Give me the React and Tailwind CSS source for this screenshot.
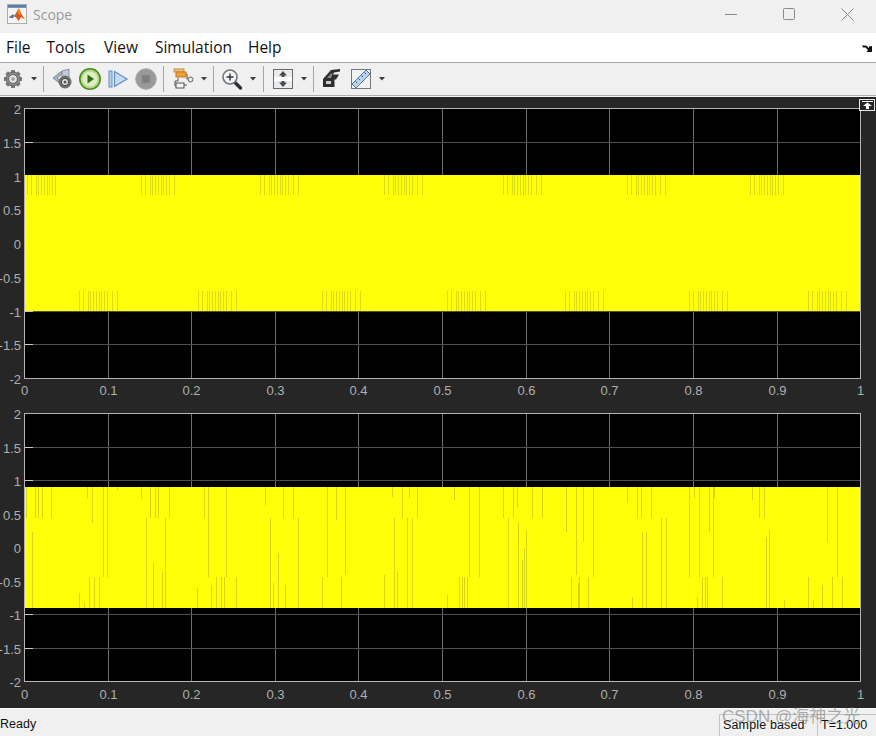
import React from 'react';

const xTicks = [24, 108, 191, 275, 358, 442, 526, 609, 693, 777, 860];
const xLabels = ['0', '0.1', '0.2', '0.3', '0.4', '0.5', '0.6', '0.7', '0.8', '0.9', '1'];
const yLabels = ['2', '1.5', '1', '0.5', '0', '-0.5', '-1', '-1.5', '-2'];

// bursts in the upper trace: [start, width]
const burst = [0, 4, 9, 11, 14, 17, 20, 22, 25, 28, 33, 38];
const topBursts = [[27, 29], [141, 33], [260, 38], [384, 38], [503, 38], [627, 38], [750, 33]];
const bottomBursts = [[79, 38], [198, 38], [322, 38], [447, 38], [565, 38], [689, 38], [808, 38]];
const upperLines = [
  ...topBursts.flatMap(([s, w]) => burst.filter(o => o <= w).map(o => [s + o, 175, 195])),
  ...bottomBursts.flatMap(([s, w]) => burst.filter(o => o <= w).map(o => [s + o, 291, 311])),
];

// lower trace, read off the picture
const T = 487, A = 518, B = 577, E = 608;
const lowerLines = [
  [26, T, A], [32, 532, E], [35, T, A], [38, T, A], [42, T, A], [51, T, A], [79, 593, E], [84, 603, E],
  [87, T, 498], [89, B, E], [92, T, 523], [94, B, E], [99, B, E], [103, T, B], [107, T, B], [117, T, 490],
  [141, T, 499], [146, A, E], [150, T, A], [153, 563, E], [155, T, A], [158, T, A], [162, 572, E], [165, A, E],
  [169, T, A], [197, 588, E], [204, T, A], [208, T, B], [211, 585, E], [216, B, E], [221, B, E], [224, B, E],
  [226, T, B], [236, B, E], [265, T, 505], [270, A, E], [273, 583, E], [278, 553, E], [283, T, A], [285, 585, E],
  [293, T, A], [298, A, E], [322, B, E], [327, T, B], [336, T, 520], [341, B, E], [345, T, 575], [384, 575, E],
  [392, T, 497], [394, A, E], [397, 572, E], [402, T, A], [407, A, E], [409, T, 498], [412, A, E], [417, T, A],
  [447, 595, E], [454, T, 500], [459, B, E], [462, B, E], [464, B, E], [467, B, E], [469, T, B], [479, T, B],
  [503, T, A], [508, A, E], [513, T, A], [517, T, 508], [518, 522, E], [522, 560, E], [524, 548, E], [526, 530, E],
  [532, T, A], [542, T, A], [566, T, 532], [571, B, E], [576, T, 575], [578, 583, E], [579, B, E], [583, T, 542],
  [588, B, E], [593, T, B], [627, T, 503], [632, 597, E], [637, T, A], [641, T, A], [642, 532, E], [646, 532, E],
  [651, T, A], [661, A, E], [666, A, E], [689, T, B], [694, T, 498], [697, 597, E], [699, T, B], [702, B, E],
  [705, B, E], [707, B, E], [709, T, 532], [713, T, B], [714, T, 498], [722, B, E], [752, T, 500], [759, T, A],
  [764, T, A], [766, 537, E], [769, 530, E], [784, 600, E], [808, B, E], [813, 600, E], [822, 585, E], [827, T, 542],
  [832, B, E], [837, T, B], [842, B, E],
];

function Plot({ y0, height, top, bottom, traceTop, traceBottom, lines, lineClass, labelY }) {
  const step = (bottom - top) / 8;
  const ys = yLabels.map((_, i) => top + step * i);
  return (
    <svg viewBox={`0 ${y0} 876 ${height}`} className="block w-[876px] shrink-0" style={{ height }}>
      <rect x="24" y={top} width="836" height={bottom - top} className="fill-black" />
      {xTicks.slice(1, -1).map(x => (
        <line key={x} x1={x + 0.5} x2={x + 0.5} y1={top} y2={bottom} className="stroke-[#6e6e6e]" />
      ))}
      {ys.slice(1, -1).map(y => (
        <line key={y} x1="24" x2="860" y1={Math.round(y) + 0.5} y2={Math.round(y) + 0.5} className="stroke-[#505050]" />
      ))}
      {ys.slice(1, -1).map(y => (
        <line key={y} x1="24" x2="33" y1={Math.round(y) + 0.5} y2={Math.round(y) + 0.5} className="stroke-[#c8c8c8]" />
      ))}
      <rect x="24" y={traceTop} width="836" height={traceBottom - traceTop} className="fill-[#ffff0a]" />
      {lines.map(([x, a, b], i) => (
        <line key={i} x1={x + 0.5} x2={x + 0.5} y1={a} y2={b} className={lineClass} />
      ))}
      <rect x="24.5" y={top + 0.5} width="836" height={bottom - top} className="fill-none stroke-[#b4b4b4]" />
      {yLabels.map((label, i) => (
        <text key={label} x="21" y={ys[i] + 6} textAnchor="end" className="fill-[#aeaeae] text-[13px] font-['Liberation_Sans',sans-serif]">
          {label}
        </text>
      ))}
      {xLabels.map((label, i) => (
        <text key={label} x={xTicks[i] + 0.5} y={labelY} textAnchor="middle" className="fill-[#aeaeae] text-[13px] font-['Liberation_Sans',sans-serif]">
          {label}
        </text>
      ))}
    </svg>
  );
}

const MatlabIcon = () => (
  <svg width="20" height="20" viewBox="0 0 21 21" className="shrink-0">
    <rect x="0.5" y="0.5" width="20" height="20" fill="#f4f4f4" stroke="#a8a8a8" />
    <rect x="1" y="1" width="19" height="3" fill="#5a7fa8" />
    <path d="M2 14l4-3 2 1 4-7c1-.5 2 3 3 5s3 5 4 6c-2 0-3-2-4-2s-2 3-3 4c-1-2-2-4-4-5-1 0-3 2-3 2z" fill="#d9581c" />
    <path d="M2 14l4-3 2 1-2 3z" fill="#4a7fb5" />
    <path d="M12 5c1-.5 2 3 3 5l-2 2c-1-2-2-3-2-4z" fill="#f08a24" />
  </svg>
);

const Caret = ({ className = '' }) => (
  <svg width="6" height="4" viewBox="0 0 6 4" className={`shrink-0 ${className}`}>
    <path d="M0 0h6L3 3.5z" fill="#3c3c3c" />
  </svg>
);

const Sep = ({ className = '' }) => <div className={`h-[26px] w-px shrink-0 bg-[#a6a6a6] ${className}`} />;

const Ic = ({ className = '', children }) => (
  <svg width="24" height="24" viewBox="0 0 24 24" className={`shrink-0 ${className}`}>
    {children}
  </svg>
);

const gearTeeth = [0, 45, 90, 135, 180, 225, 270, 315];

const GearIcon = ({ className }) => (
  <Ic className={className}>
    {gearTeeth.map(a => (
      <rect key={a} x="10" y="3" width="4" height="4" fill="#7c7c7c" transform={`rotate(${a} 12 12)`} />
    ))}
    <circle cx="12" cy="12" r="7" fill="#8a8a8a" stroke="#666" />
    <circle cx="12" cy="12" r="4.4" fill="#e8e8e8" stroke="#5e5e5e" />
    <circle cx="12" cy="12" r="2" fill="#a4a4a4" />
  </Ic>
);

const BackIcon = ({ className }) => (
  <Ic className={className}>
    <path d="M2 11l9-7v3l-5 4 5 4v3z" fill="#a9b9cc" stroke="#62748a" strokeWidth="0.8" />
    <path d="M11 4l7-2v9l-7 0z" fill="#c4ccd6" stroke="#7a8592" strokeWidth="0.8" />
    <circle cx="14" cy="15" r="6.5" fill="#6e6e6e" />
    <circle cx="14" cy="15" r="3.6" fill="#e6e6e6" stroke="#444" />
    <circle cx="14" cy="15" r="1.5" fill="#555" />
  </Ic>
);

const PlayIcon = ({ className }) => (
  <Ic className={className}>
    <circle cx="12" cy="12" r="10.2" fill="#b5d88a" stroke="#4c8a1c" strokeWidth="1.6" />
    <circle cx="12" cy="12" r="7.5" fill="#dcefc2" />
    <path d="M9.5 7.5l6.5 4.5-6.5 4.5z" fill="#33691a" />
  </Ic>
);

const StepIcon = ({ className }) => (
  <Ic className={className}>
    <rect x="3" y="4" width="3" height="16" fill="#b9d2ec" stroke="#5f8fc0" />
    <path d="M8.5 4.5L21 12 8.5 19.5z" fill="#c5dbf1" stroke="#5f8fc0" strokeWidth="1.2" />
  </Ic>
);

const StopIcon = ({ className }) => (
  <Ic className={className}>
    <circle cx="12" cy="12" r="10.3" fill="#9a9a9a" stroke="#a8a8a8" />
    <rect x="8" y="8" width="8" height="8" fill="#7e7e7e" stroke="#8c8c8c" />
  </Ic>
);

const BlocksIcon = ({ className }) => (
  <Ic className={className}>
    <path d="M12 7h4v5h3M7 11v3H4v5h3M16 18h-4" fill="none" stroke="#555" />
    <rect x="3" y="2" width="10" height="3" fill="#f0c08a" stroke="#c98a3c" />
    <rect x="5" y="5" width="10" height="5" fill="#f2a03c" stroke="#c47a20" />
    <rect x="17" y="10" width="5" height="5" rx="2.5" fill="#e6e6e6" stroke="#666" />
    <rect x="5" y="16" width="8" height="5" fill="#f4f4f4" stroke="#555" />
  </Ic>
);

const ZoomIcon = ({ className }) => (
  <Ic className={className}>
    <path d="M14.5 15l6 6" stroke="#2e2e2e" strokeWidth="3.4" strokeLinecap="round" />
    <circle cx="10" cy="10" r="7" fill="#f0f4f6" stroke="#6e7478" strokeWidth="1.6" />
    <path d="M6.5 10h7M10 6.5v7" stroke="#333" strokeWidth="1.4" />
  </Ic>
);

const FitIcon = ({ className }) => (
  <Ic className={className}>
    <rect x="2.5" y="2.5" width="19" height="19" fill="#e8ecee" stroke="#6a6a6a" />
    <rect x="3" y="10" width="18" height="4" fill="#fff" />
    <path d="M12 4l4 4.500h-2.500V10h-3V8.500H8zM12 20l4-4.500h-2.500V14h-3v1.500H8z" fill="#4a4a4a" />
  </Ic>
);

const SignalIcon = ({ className }) => (
  <Ic className={className}>
    <path d="M3 12l8-9 9-1v2.500l-6 1-1 2h6l-3 5h-1.500v7.500H3z" fill="#2e2e2e" />
    <path d="M6 14h5v3H6z" fill="#d0d0d0" />
    <path d="M7 11l4-4.500h1.500L11 11z" fill="#8a8a8a" />
  </Ic>
);

const RulerIcon = ({ className }) => (
  <Ic className={className}>
    <rect x="2.500" y="2.500" width="19" height="19" fill="#f3f3f3" stroke="#777" />
    <path d="M3 17L17 3l4 4L7 21z" fill="#b9d3ea" stroke="#4f7fa8" />
    <path d="M8 16l-1.500-1.500M11 13l-1.500-1.500M14 10l-1.500-1.500M17 7l-1.500-1.500" stroke="#2f5f88" />
  </Ic>
);

const menus = ['File', 'Tools', 'View', 'Simulation', 'Help'];
const menuMargins = ['ml-[6px]', 'ml-[16px]', 'ml-[19px]', 'ml-[17px]', 'ml-[16px]'];

export default function App() {
  return (
    <div className="relative flex h-[736px] w-[876px] flex-col overflow-hidden bg-[#f0f0f0] font-['Liberation_Sans',sans-serif]">
      {/* Title bar */}
      <div className="flex h-[33px] shrink-0 items-center bg-[#f0f0f0] pb-[5px]">
        <div className="ml-[7px] mr-[6px]">
          <MatlabIcon />
        </div>
        <span className="font-['Open_Sans',sans-serif] text-[14px] text-[#9a9a9a]">Scope</span>
        <div className="ml-auto flex">
          <div className="flex h-[28px] w-[58px] items-center justify-center">
            <svg width="12" height="1" viewBox="0 0 12 1"><rect width="12" height="1" fill="#8a8a8a" /></svg>
          </div>
          <div className="flex h-[28px] w-[58px] items-center justify-center">
            <svg width="12" height="12" viewBox="0 0 12 12"><rect x="0.500" y="0.500" width="11" height="11" rx="1" fill="none" stroke="#8a8a8a" /></svg>
          </div>
          <div className="flex h-[28px] w-[58px] items-center justify-center">
            <svg width="13" height="13" viewBox="0 0 13 13"><path d="M0.500 0.500l12 12M12.500 0.500l-12 12" stroke="#8a8a8a" /></svg>
          </div>
        </div>
      </div>

      {/* Menu bar */}
      <div className="flex h-[30px] shrink-0 items-center border-b border-[#a8a8a8] bg-white font-['Open_Sans',sans-serif] text-[15.500px] text-[#111]">
        {menus.map((m, i) => (
          <span key={m} className={menuMargins[i]}>{m}</span>
        ))}
        <svg width="10" height="8" viewBox="0 0 10 8" className="ml-auto mr-[4px]">
          <path d="M0 1.500h4L7 4V2.500L10 2v6H4.500L6 6 3.500 3.500H1z" fill="#111" />
        </svg>
      </div>

      {/* Toolbar */}
      <div className="flex h-[33px] shrink-0 items-center border-b border-[#b0b0b0] bg-[#f0f0f0]">
        <GearIcon className="ml-px" />
        <Caret className="ml-[6px]" />
        <Sep className="ml-[6px]" />
        <BackIcon className="ml-[7px]" />
        <PlayIcon className="ml-[3px]" />
        <StepIcon className="ml-[4px]" />
        <StopIcon className="ml-[4px]" />
        <Sep className="ml-[5px]" />
        <BlocksIcon className="ml-[7px]" />
        <Caret className="ml-[6px]" />
        <Sep className="ml-[6px]" />
        <ZoomIcon className="ml-[6px]" />
        <Caret className="ml-[6px]" />
        <Sep className="ml-[7px]" />
        <FitIcon className="ml-[7px]" />
        <Caret className="ml-[6px]" />
        <Sep className="ml-[6px]" />
        <SignalIcon className="ml-[6px]" />
        <RulerIcon className="ml-[5px]" />
        <Caret className="ml-[6px]" />
      </div>

      {/* Scope plots */}
      <div className="relative flex h-[612px] shrink-0 flex-col border-t border-[#f8f8f8] bg-[#262626]">
        <Plot
          y0={97}
          height={305}
          top={108}
          bottom={378}
          traceTop={175}
          traceBottom={311}
          lines={upperLines}
          lineClass="stroke-[#dcdc14]"
          labelY={395}
        />
        <Plot
          y0={402}
          height={306}
          top={413}
          bottom={681}
          traceTop={487}
          traceBottom={608}
          lines={lowerLines}
          lineClass="stroke-[#d6d614]"
          labelY={699}
        />
        <div className="absolute right-px top-[2px] flex h-[12px] w-[16px] items-center justify-center border border-[#e8e8e8] bg-[#262626]">
          <svg width="11" height="8" viewBox="0 0 11 8">
            <path d="M0 0h11v1H0zM5.500 1.500L10 5H7v3H4V5H1z" fill="#fff" />
          </svg>
        </div>
      </div>

      {/* Status bar */}
      <div className="flex flex-1 items-end border-t border-[#f8f8f8] bg-[#f0f0f0] text-[12.500px] text-[#111]">
        <span className="mb-[2px]">Ready</span>
        <div className="ml-auto flex h-[22px]">
          <div className="flex w-[98px] items-center border-l border-t border-[#c4c4c4] pl-[3px] tracking-[0.15px]">Sample based</div>
          <div className="flex w-[59px] items-center border-l border-t border-[#c4c4c4] pl-[3px]">T=1.000</div>
        </div>
      </div>

      {/* CSDN watermark */}
      <span className="absolute left-[722px] top-[704px] whitespace-nowrap font-['Liberation_Sans','Noto_Sans_CJK_SC',sans-serif] text-[17px] text-[#8c8c8c]/70">
        CSDN @海神之光
      </span>
    </div>
  );
}
